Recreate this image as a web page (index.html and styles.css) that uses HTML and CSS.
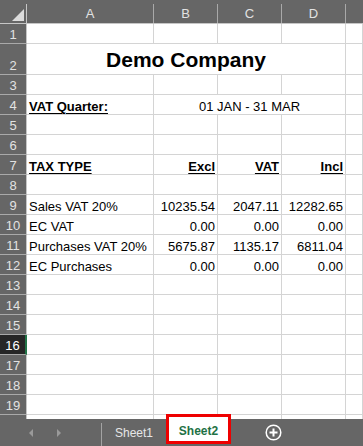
FILE: index.html
```html
<!DOCTYPE html>
<html>
<head>
<meta charset="utf-8">
<link rel="stylesheet" href="styles.css">
</head>
<body>
<div class="app">
  <div class="sheet">
    <div class="ch corner"><div class="chi cornerin"><svg width="12" height="12" viewBox="0 0 12 12"><polygon points="12,0 12,12 0,12" fill="#dcdcdc"/></svg></div></div>
    <div class="ch"><div class="chi">A</div></div>
    <div class="ch"><div class="chi">B</div></div>
    <div class="ch"><div class="chi">C</div></div>
    <div class="ch"><div class="chi">D</div></div>
    <div class="ch"><div class="chi noline"></div></div>

    <div class="rh">1</div><div class="c"></div><div class="c"></div><div class="c"></div><div class="c"></div><div class="c"></div>
    <div class="rh">2</div><div class="c title span4">Demo Company</div><div class="c"></div>
    <div class="rh">3</div><div class="c"></div><div class="c"></div><div class="c"></div><div class="c"></div><div class="c"></div>
    <div class="rh">4</div><div class="c"><span class="b u">VAT Quarter:</span></div><div class="c center span3">01 JAN - 31 MAR</div><div class="c"></div>
    <div class="rh">5</div><div class="c"></div><div class="c"></div><div class="c"></div><div class="c"></div><div class="c"></div>
    <div class="rh">6</div><div class="c"></div><div class="c"></div><div class="c"></div><div class="c"></div><div class="c"></div>
    <div class="rh">7</div><div class="c"><span class="b u">TAX TYPE</span></div><div class="c num"><span class="b u">Excl</span></div><div class="c num"><span class="b u">VAT</span></div><div class="c num"><span class="b u">Incl</span></div><div class="c"></div>
    <div class="rh">8</div><div class="c"></div><div class="c"></div><div class="c"></div><div class="c"></div><div class="c"></div>
    <div class="rh">9</div><div class="c">Sales VAT 20%</div><div class="c num">10235.54</div><div class="c num">2047.11</div><div class="c num">12282.65</div><div class="c"></div>
    <div class="rh">10</div><div class="c">EC VAT</div><div class="c num">0.00</div><div class="c num">0.00</div><div class="c num">0.00</div><div class="c"></div>
    <div class="rh">11</div><div class="c">Purchases VAT 20%</div><div class="c num">5675.87</div><div class="c num">1135.17</div><div class="c num">6811.04</div><div class="c"></div>
    <div class="rh">12</div><div class="c">EC Purchases</div><div class="c num">0.00</div><div class="c num">0.00</div><div class="c num">0.00</div><div class="c"></div>
    <div class="rh">13</div><div class="c"></div><div class="c"></div><div class="c"></div><div class="c"></div><div class="c"></div>
    <div class="rh">14</div><div class="c"></div><div class="c"></div><div class="c"></div><div class="c"></div><div class="c"></div>
    <div class="rh">15</div><div class="c"></div><div class="c"></div><div class="c"></div><div class="c"></div><div class="c"></div>
    <div class="rh active">16</div><div class="c"></div><div class="c"></div><div class="c"></div><div class="c"></div><div class="c"></div>
    <div class="rh">17</div><div class="c"></div><div class="c"></div><div class="c"></div><div class="c"></div><div class="c"></div>
    <div class="rh">18</div><div class="c"></div><div class="c"></div><div class="c"></div><div class="c"></div><div class="c"></div>
    <div class="rh">19</div><div class="c"></div><div class="c"></div><div class="c"></div><div class="c"></div><div class="c"></div>
    <div class="rh"></div><div class="c"></div><div class="c"></div><div class="c"></div><div class="c"></div><div class="c"></div>
  </div>
  <div class="tabbar">
    <div class="nav">
      <svg class="arr" width="5" height="8" viewBox="0 0 5 8"><polygon points="4,0 4,8 0,4" fill="#9a9a9a"/></svg>
      <svg class="arr" width="5" height="8" viewBox="0 0 5 8"><polygon points="0,0 0,8 4,4" fill="#9a9a9a"/></svg>
    </div>
    <div class="sep"></div>
    <div class="tab">Sheet1</div>
    <div class="tab active">Sheet2</div>
    <svg class="plus" width="17" height="17" viewBox="0 0 17 17"><circle cx="8.5" cy="8.5" r="7.3" fill="none" stroke="#ffffff" stroke-width="1.5"/><path d="M8.5 4.5V12.5M4.5 8.5H12.5" stroke="#ffffff" stroke-width="2"/></svg>
  </div>
</div>
</body>
</html>
```
FILE: styles.css
```css
* { box-sizing: border-box; }
html, body { margin: 0; padding: 0; background: #ffffff; }
body { font-family: "Liberation Sans", Arial, sans-serif; font-size: 13px; color: #000; }
.app { width: 363px; height: 446px; display: flex; flex-direction: column; overflow: hidden; }
.sheet {
  height: 419px;
  overflow: hidden;
  display: grid;
  grid-template-columns: 27px 127px 64px 64px 64px 1fr;
  grid-template-rows: 24px 20px 31px repeat(18, 20px);
}
.ch {
  background: #666666;
  padding-top: 4px;
  border-bottom: 1px solid #c6c6c6;
}
.chi {
  height: 100%;
  border-right: 1px solid #a9a9a9;
  color: #e2e2e2;
  display: flex;
  align-items: center;
  justify-content: center;
  font-size: 13px;
}
.chi.noline { border-right: none; }
.cornerin {
  justify-content: flex-end;
  align-items: flex-end;
  padding: 0 2px 2px 0;
  border-right-color: #c6c6c6;
}
.cornerin svg { display: block; }
.rh {
  background: #666666;
  color: #e2e2e2;
  border-right: 1px solid #c6c6c6;
  border-bottom: 1px solid #a9a9a9;
  display: flex;
  align-items: flex-end;
  justify-content: center;
  padding-bottom: 1px;
  line-height: 15px;
  font-size: 13px;
}
.rh.active { background: #262626; color: #ffffff; border-right: 2px solid #217346; }
.c {
  border-right: 1px solid #d4d4d4;
  border-bottom: 1px solid #d4d4d4;
  display: flex;
  align-items: flex-end;
  padding: 0 2px;
  line-height: 15px;
  white-space: nowrap;
}
.num { justify-content: flex-end; padding-right: 2px; }
.center { justify-content: center; }
.span4 { grid-column: span 4; }
.span3 { grid-column: span 3; }
.b { font-weight: bold; }
.u { text-decoration: underline; text-decoration-thickness: 1px; text-underline-offset: 2px; }
.title {
  justify-content: center;
  align-items: center;
  font-weight: bold;
  font-size: 21px;
  line-height: 24px;
  padding-top: 1px;
}
.tabbar {
  height: 27px;
  background: #666666;
  display: flex;
  align-items: center;
}
.nav {
  width: 101px;
  height: 100%;
  display: flex;
  align-items: center;
  padding-left: 29px;
  gap: 23px;
}
.arr { display: block; }
.sep { width: 1px; align-self: stretch; margin-top: 4px; background: #a3a3a3; }
.tab {
  width: 64px;
  text-align: center;
  color: #e6e6e6;
  font-size: 12px;
}
.tab.active {
  width: 65px;
  align-self: flex-start;
  margin-top: -5px;
  height: 30px;
  background: #ffffff;
  border: 3px solid #ee0000;
  color: #1e7145;
  font-weight: bold;
  display: flex;
  align-items: center;
  justify-content: center;
  padding-top: 3px;
}
.plus { display: block; margin-left: 34px; margin-top: -1px; }
```
